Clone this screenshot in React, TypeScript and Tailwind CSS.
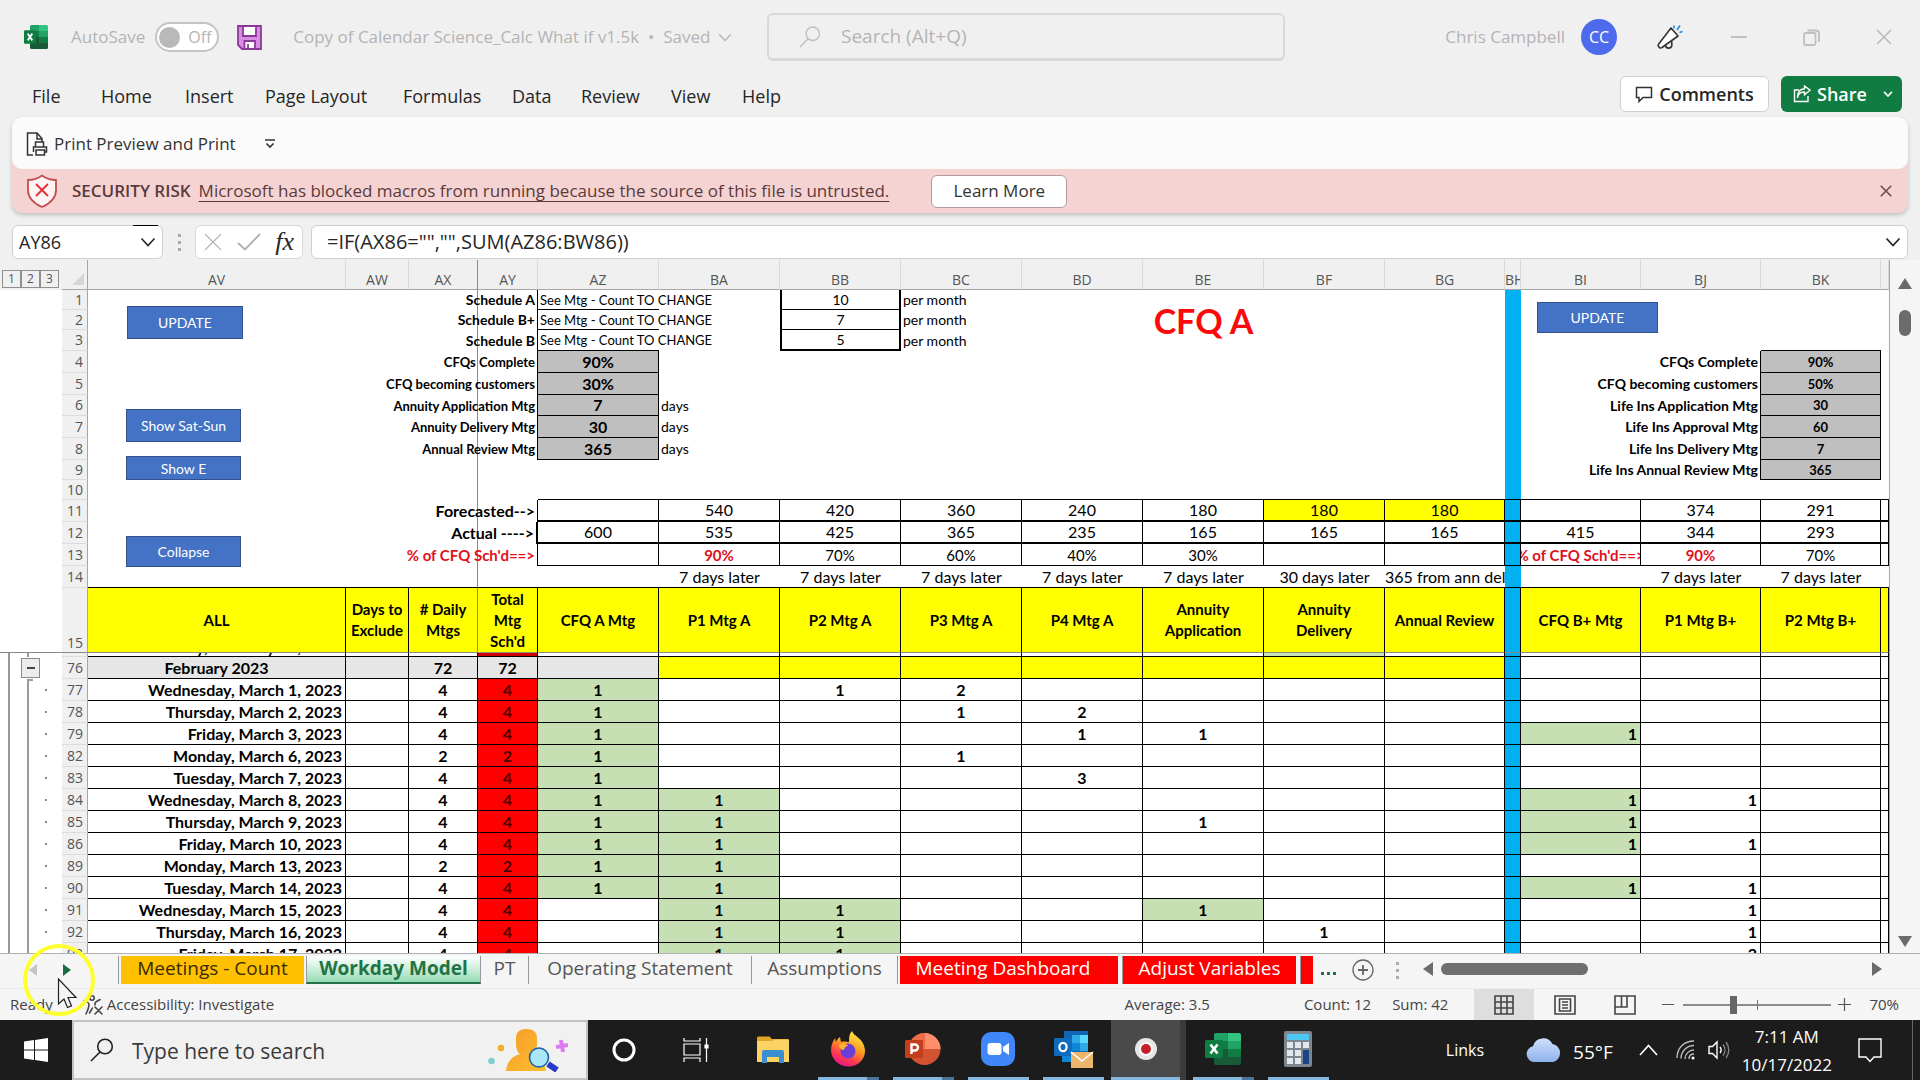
import React from "react";

const UI = "font-['Open_Sans','Noto_Sans',sans-serif]";

type Spec = [string, string?, string?];
type Row = {
  n: string;
  h: string;
  base: Record<string, string>;
  cells: Record<string, Spec>;
  outline?: "box" | "dot" | "first" | "line";
  skip?: string[];
  spans?: Record<string, number>;
};

const COLS: { id: string; w: string }[] = [
  { id: "AV", w: "w-[258px]" },
  { id: "AW", w: "w-[63px]" },
  { id: "AX", w: "w-[69px]" },
  { id: "AY", w: "w-[60px]" },
  { id: "AZ", w: "w-[121px]" },
  { id: "BA", w: "w-[121px]" },
  { id: "BB", w: "w-[121px]" },
  { id: "BC", w: "w-[121px]" },
  { id: "BD", w: "w-[121px]" },
  { id: "BE", w: "w-[121px]" },
  { id: "BF", w: "w-[121px]" },
  { id: "BG", w: "w-[120px]" },
  { id: "BH", w: "w-[16px]" },
  { id: "BI", w: "w-[120px]" },
  { id: "BJ", w: "w-[120px]" },
  { id: "BK", w: "w-[120px]" },
  { id: "BL", w: "" },
];

const S = "text-[13px]";
const M = "text-[14px]";
const L = "text-[15px]";
const XL = "text-[16px]";
const SB = "text-[13px] font-bold";
const MB = "text-[14px] font-bold";
const LB = "text-[15px] font-bold";
const XB = "text-[16px] font-bold";
const RED = "text-[15px] font-bold text-[#e0101c]";
const END = "justify-end pr-0.5";
const MID = "justify-center";
const START = "justify-start pl-0.5";

const topBase: Record<string, string> = {
  AX: "border-r border-[#8a8a8a]",
  BH: "bg-[#00b0f0]",
};
const RB = "border-r border-black";
const GRAY = "bg-[#bfbfbf] border-r border-b border-black";
const BOX = "border-x-2 border-b border-black";
const BOXEND = "border-x-2 border-b-2 border-black";
const MAIN = ["AZ", "BA", "BB", "BC", "BD", "BE", "BF", "BG", "BI", "BJ", "BK", "BL"];

function schedule(n: string, h: string, label: string, v: string, last: boolean): Row {
  const r: Row = {
    n,
    h,
    base: { ...topBase, AY: RB, AZ: "border-b border-black", BB: last ? BOXEND : BOX },
    cells: {
      AY: [label, MB, END],
      AZ: ["See Mtg - Count TO CHANGE", S, START],
      BB: [v, M, MID],
      BC: ["per month", M, START],
    },
  };
  if (last) r.base.BK = "border-b border-black";
  return r;
}

function param(n: string, h: string, a: [string, string, string] | null, b: [string, string] | null): Row {
  const r: Row = { n, h, base: { ...topBase }, cells: {} };
  if (a) {
    r.base.AY = RB;
    r.base.AZ = GRAY;
    r.cells.AY = [a[0], SB, END];
    r.cells.AZ = [a[1], XB, MID];
    if (a[2]) r.cells.BA = [a[2], M, START];
  }
  if (b) {
    r.base.BJ = RB;
    r.base.BK = GRAY;
    r.cells.BJ = [b[0], MB, END];
    r.cells.BK = [b[1], SB, MID];
  }
  return r;
}

function fill(ids: string[], cls: string): Record<string, string> {
  const out: Record<string, string> = {};
  ids.forEach((i) => (out[i] = cls));
  return out;
}

function centred(v: Record<string, string>, cls: string): Record<string, Spec> {
  const out: Record<string, Spec> = {};
  Object.keys(v).forEach((k) => (out[k] = [v[k], cls, MID]));
  return out;
}

const THICK = "border-r border-b-2 border-black";
const THIN = "border-r border-b border-black";
const ALLIDS = COLS.map((c) => c.id);

const rowsTop: Row[] = [
  { ...schedule("1", "h-[20px]", "Schedule A", "10", false), spans: { BE: 3 } },
  { ...schedule("2", "h-[20px]", "Schedule B+", "7", false), skip: ["BE"] },
  { ...schedule("3", "h-[21px]", "Schedule B", "5", true), skip: ["BE"] },
  param("4", "h-[22px]", ["CFQs Complete", "90%", ""], ["CFQs Complete", "90%"]),
  param("5", "h-[22px]", ["CFQ becoming customers", "30%", ""], ["CFQ becoming customers", "50%"]),
  param("6", "h-[21px]", ["Annuity Application Mtg", "7", "days"], ["Life Ins Application Mtg", "30"]),
  param("7", "h-[22px]", ["Annuity Delivery Mtg", "30", "days"], ["Life Ins Approval Mtg", "60"]),
  param("8", "h-[22px]", ["Annual Review Mtg", "365", "days"], ["Life Ins Delivery Mtg", "7"]),
  param("9", "h-[20px]", null, ["Life Ins Annual Review Mtg", "365"]),
  { n: "10", h: "h-[20px]", base: { ...topBase, ...fill(MAIN, "border-b border-black"), BH: "bg-[#00b0f0] border-b border-black" }, cells: {} },
  {
    n: "11",
    h: "h-[22px]",
    base: {
      ...topBase,
      ...fill(MAIN, THICK),
      AY: RB,
      BF: "border-r border-b-2 border-black bg-[#ffff00]",
      BG: "border-r border-b-2 border-black bg-[#ffff00]",
      BH: "bg-[#00b0f0] border-r border-b-2 border-black",
    },
    cells: {
      AY: ["Forecasted-->", XB, END],
      ...centred({ BA: "540", BB: "420", BC: "360", BD: "240", BE: "180", BF: "180", BG: "180", BJ: "374", BK: "291" }, XL),
    },
  },
  {
    n: "12",
    h: "h-[22px]",
    base: { ...topBase, ...fill(MAIN, THICK), AY: "border-r-2 border-black", BH: "bg-[#00b0f0] border-r border-b-2 border-black" },
    cells: {
      AY: ["Actual ---->", XB, END],
      ...centred({ AZ: "600", BA: "535", BB: "425", BC: "365", BD: "235", BE: "165", BF: "165", BG: "165", BI: "415", BJ: "344", BK: "293" }, XL),
    },
  },
  {
    n: "13",
    h: "h-[22px]",
    base: { ...topBase, ...fill(MAIN, THIN), AY: RB, BH: "bg-[#00b0f0] border-r border-b border-black" },
    cells: {
      AY: ["% of CFQ Sch'd==>", RED, END],
      BI: ["% of CFQ Sch'd==>", RED, "justify-center overflow-hidden"],
      ...centred({ BB: "70%", BC: "60%", BD: "40%", BE: "30%", BK: "70%" }, L),
      ...centred({ BA: "90%", BJ: "90%" }, RED),
    },
  },
  {
    n: "14",
    h: "h-[22px]",
    base: { ...fill(ALLIDS, "border-b border-black"), AX: "border-b border-b-black border-r border-r-[#8a8a8a]", BH: "bg-[#00b0f0] border-b border-black" },
    cells: {
      ...centred({ BA: "7 days later", BB: "7 days later", BC: "7 days later", BD: "7 days later", BE: "7 days later", BF: "30 days later", BJ: "7 days later", BK: "7 days later" }, XL),
      BG: ["365 from ann del", XL, "justify-start"],
    },
  },
  {
    n: "15",
    h: "h-[65px]",
    base: {
      ...fill(ALLIDS, "bg-[#ffff00] border-r border-b border-r-black border-b-[#8a8a8a]"),
      AX: "bg-[#ffff00] border-r border-b border-[#8a8a8a]",
      BH: "bg-[#00b0f0] border-r border-b border-r-black border-b-[#8a8a8a]",
    },
    cells: centred(
      {
        AV: "ALL",
        AW: "Days to\nExclude",
        AX: "# Daily\nMtgs",
        AY: "Total\nMtg\nSch'd",
        AZ: "CFQ A Mtg",
        BA: "P1 Mtg A",
        BB: "P2 Mtg A",
        BC: "P3 Mtg A",
        BD: "P4 Mtg A",
        BE: "Annuity\nApplication",
        BF: "Annuity\nDelivery",
        BG: "Annual Review",
        BI: "CFQ B+ Mtg",
        BJ: "P1 Mtg B+",
        BK: "P2 Mtg B+",
      },
      LB
    ),
  },
];
rowsTop[0].cells.BE = ["CFQ A", "text-[34px] font-bold text-[#fa0a0a]", MID];

const GREEN = "bg-[#c6e0b4] border-r border-b border-black";
const dataBase: Record<string, string> = {
  ...fill(ALLIDS, THIN),
  AY: "bg-[#ff0000] border-r border-b border-black",
  BH: "bg-[#00b0f0] border-r border-b border-black",
};

function day(n: string, date: string, mtgs: string, vals: Record<string, string>, green: string[]): Row {
  const cells: Record<string, Spec> = {
    AV: [date, XB, "justify-end pr-[3px]"],
    AX: [mtgs, XB, MID],
    AY: [mtgs, "text-[16px] font-bold text-[#4a0000]", MID],
  };
  Object.keys(vals).forEach((k) => {
    cells[k] = [vals[k], XB, k === "BI" || k === "BJ" ? "justify-end pr-[3px]" : MID];
  });
  return { n, h: "h-[22px]", base: { ...dataBase, ...fill(green, GREEN) }, cells, outline: "dot" };
}

const rowsData: Row[] = [
  {
    n: "",
    h: "h-[4px]",
    base: { ...dataBase, AY: "bg-[#d00000] border-r border-b border-black", BF: GREEN },
    cells: { AV: ["Tuesday, February 28, 2023", XB, "h-[3px] items-end overflow-hidden justify-end pr-[3px]"] },
    outline: "line",
  },
  {
    n: "76",
    h: "h-[22px]",
    base: {
      ...dataBase,
      ...fill(["AV", "AW", "AX", "AY", "AZ"], "bg-[#e7e6e6] border-r border-b border-black"),
      ...fill(["BA", "BB", "BC", "BD", "BE", "BF", "BG"], "bg-[#ffff00] border-r border-b border-black"),
    },
    cells: centred({ AV: "February 2023", AX: "72", AY: "72" }, XB),
    outline: "box",
  },
  { ...day("77", "Wednesday, March 1, 2023", "4", { AZ: "1", BB: "1", BC: "2" }, ["AZ"]), outline: "first" },
  day("78", "Thursday, March 2, 2023", "4", { AZ: "1", BC: "1", BD: "2" }, ["AZ"]),
  day("79", "Friday, March 3, 2023", "4", { AZ: "1", BD: "1", BE: "1", BI: "1" }, ["AZ", "BI"]),
  day("82", "Monday, March 6, 2023", "2", { AZ: "1", BC: "1" }, ["AZ"]),
  day("83", "Tuesday, March 7, 2023", "4", { AZ: "1", BD: "3" }, ["AZ"]),
  day("84", "Wednesday, March 8, 2023", "4", { AZ: "1", BA: "1", BI: "1", BJ: "1" }, ["AZ", "BA", "BI"]),
  day("85", "Thursday, March 9, 2023", "4", { AZ: "1", BA: "1", BE: "1", BI: "1" }, ["AZ", "BA", "BI"]),
  day("86", "Friday, March 10, 2023", "4", { AZ: "1", BA: "1", BI: "1", BJ: "1" }, ["AZ", "BA", "BI"]),
  day("89", "Monday, March 13, 2023", "2", { AZ: "1", BA: "1" }, ["AZ", "BA"]),
  day("90", "Tuesday, March 14, 2023", "4", { AZ: "1", BA: "1", BI: "1", BJ: "1" }, ["AZ", "BA", "BI"]),
  day("91", "Wednesday, March 15, 2023", "4", { BA: "1", BB: "1", BE: "1", BJ: "1" }, ["BA", "BB", "BE"]),
  day("92", "Thursday, March 16, 2023", "4", { BA: "1", BB: "1", BF: "1", BJ: "1" }, ["BA", "BB"]),
  { ...day("93", "Friday, March 17, 2023", "4", { BA: "1", BB: "1", BJ: "2" }, ["BA", "BB"]), outline: "line" },
];

function Outline({ kind }: { kind?: string }) {
  if (!kind) return null;
  return (
    <div className="flex h-full items-stretch">
      <div className="ml-2 w-0.5 bg-[#9a9a9a]" />
      {kind === "box" ? (
        <button aria-label="Collapse group" className="ml-[11px] flex h-5 w-[19px] items-center justify-center self-center border border-[#8a8a8a] bg-[#ececec]">
          <span className="h-0.5 w-2 bg-[#444]" />
        </button>
      ) : (
        <div className="ml-[17px] flex flex-1">
          <div className="w-0.5 bg-[#9a9a9a]" />
          {(kind === "dot" || kind === "first") && (
            <div className={`flex flex-1 items-center justify-center ${kind === "first" ? "bg-[linear-gradient(#9a9a9a,#9a9a9a)] bg-[length:4px_2px] bg-no-repeat" : ""}`}>
              <span className="size-0.5 bg-[#888]" />
            </div>
          )}
        </div>
      )}
    </div>
  );
}

function SheetRow({ row }: { row: Row }) {
  return (
    <tr className={row.h}>
      <td className={`h-px p-0 ${row.n === "15" ? "border-b border-[#8a8a8a]" : ""}`}>
        <Outline kind={row.outline} />
      </td>
      <th
        scope="row"
        className={`border-r border-b border-r-[#a6a6a6] bg-[#f0f0f0] p-0 pr-1 text-right text-[14px] leading-[18px] font-normal text-[#555] ${UI} ${
          row.n === "15" ? "border-b-[#8a8a8a] align-bottom" : "border-b-[#dcdcdc]"
        }`}
      >
        {row.n}
      </th>
      {COLS.filter((c) => !row.skip?.includes(c.id)).map((c) => {
        const cell = row.cells[c.id];
        const multi = row.n === "15";
        return (
          <td key={c.id} rowSpan={row.spans?.[c.id]} className={`p-0 ${row.base[c.id] ?? ""}`}>
            {cell && (
              <div className={`flex text-center whitespace-pre ${multi ? "leading-[21px]" : "leading-[18px]"} ${cell[1]} ${cell[2]}`}>
                <span>{cell[0]}</span>
              </div>
            )}
          </td>
        );
      })}
    </tr>
  );
}

function MacroButton({ label, place }: { label: string; place: string }) {
  return (
    <button className={`absolute border border-[#2f528f] bg-[#4472c4] text-[14px] text-white ${place}`}>{label}</button>
  );
}

function Chevron({ className, w = 2 }: { className: string; w?: number }) {
  return (
    <svg viewBox="0 0 16 10" className={className} fill="none" stroke="currentColor" strokeWidth={w}>
      <path d="M1.5 1.5 8 8.5 14.5 1.5" />
    </svg>
  );
}

function Cross({ className, w = 1.5 }: { className: string; w?: number }) {
  return (
    <svg viewBox="0 0 16 16" className={className} fill="none" stroke="currentColor" strokeWidth={w}>
      <path d="M1 1 15 15M15 1 1 15" />
    </svg>
  );
}

function Magnifier({ className }: { className: string }) {
  return (
    <svg viewBox="0 0 24 24" className={className} fill="none" stroke="currentColor" strokeWidth="1.6">
      <circle cx="15" cy="8.5" r="7.3" />
      <path d="M10 14 1 23" />
    </svg>
  );
}

function ExcelLogo({ className }: { className: string }) {
  return (
    <svg viewBox="0 0 36 32" className={className} preserveAspectRatio="none">
      <path d="M11 0h11.500v8H9V2a2 2 0 0 1 2-2z" fill="#21a366" />
      <path d="M22.500 0H34a2 2 0 0 1 2 2v6H22.500z" fill="#33c481" />
      <path d="M9 8h13.500v8H9z" fill="#107c41" />
      <path d="M22.500 8H36v8H22.500z" fill="#21a366" />
      <path d="M9 16h13.500v8H9z" fill="#185c37" />
      <path d="M22.500 16H36v8H22.500z" fill="#107c41" />
      <path d="M9 24h27v6a2 2 0 0 1-2 2H11a2 2 0 0 1-2-2z" fill="#185c37" />
      <rect x="0" y="7" width="18" height="18" rx="1.500" fill="#107c41" />
      <path d="M5.500 11.500 12.500 20.500M12.500 11.500 5.500 20.500" stroke="#fff" strokeWidth="2.600" />
    </svg>
  );
}

function TitleBar() {
  return (
    <header className="grid h-[72px] grid-cols-[767fr_518fr_635fr] items-center pt-0.5 text-[#b4b4b4]">
      <div className="flex items-center pl-6 text-[17px] whitespace-nowrap">
        <ExcelLogo className="h-6 w-6" />
        <span className="ml-[23px] text-[17px]">AutoSave</span>
        <button role="switch" aria-checked="false" aria-label="AutoSave" className="ml-2.5 flex h-[30px] w-16 items-center rounded-full border-2 border-[#c4c4c4] bg-white px-0.5">
          <span className="size-[21px] rounded-full bg-[#b9b9b9]" />
          <span className="ml-2 text-[16px]">Off</span>
        </button>
        <button aria-label="Save" className="ml-[18px]">
          <svg viewBox="0 0 25 25" className="size-[25px]" stroke="#8a3a96" strokeWidth="1.800">
            <path d="M1 1h23v23H5l-4-4z" fill="#d98be6" />
            <path d="M6 1h13v10H6z" fill="#fff" />
            <path d="M7.500 16h10.500v8H7.500z" fill="#fff" />
            <path d="M11 19v5" />
          </svg>
        </button>
        <span className="ml-[31px]">Copy of Calendar Science_Calc What if v1.5k&nbsp; •&nbsp; Saved</span>
        <Chevron className="ml-2 h-[9px] w-3.5" w={1.5} />
      </div>
      <label className="flex h-12 items-center rounded-md border-2 border-b-[3px] border-[#d9d9d9] bg-[#f0f0f0] pl-[30px]">
        <Magnifier className="size-[22px] text-[#c0c0c0]" />
        <input aria-label="Search" placeholder="Search (Alt+Q)" className="ml-5 flex-1 bg-transparent text-[19px] outline-none placeholder:text-[#b4b4b4]" />
      </label>
      <div className="flex items-center justify-end pr-7 text-[17px]">
        <span>Chris Campbell</span>
        <span className="ml-4 flex size-9 items-center justify-center rounded-full bg-[#4f6bed] text-[16px] text-white">CC</span>
        <button aria-label="What's new" className="ml-10">
          <svg viewBox="0 0 26 26" className="size-[26px]" fill="none" stroke="#333" strokeWidth="1.600" strokeLinejoin="round">
            <path d="M14 4 21 12 5 23.500a2 2 0 0 1-3-.5l-.5-.7a2 2 0 0 1 0-2z" fill="#fff" />
            <path d="M8.500 21.500a3.200 3.200 0 0 0 6.300 0v-4.300" />
            <path d="M17 4.500V1.500M20 6l3-4.500M22.500 8.500l3-1" stroke="#2b88d8" />
          </svg>
        </button>
        <button aria-label="Minimize" className="ml-12 h-0.5 w-4 bg-[#c0c0c0]" />
        <button aria-label="Restore" className="ml-14">
          <svg viewBox="0 0 17 17" className="size-[17px]" fill="none" stroke="#c0c0c0" strokeWidth="1.800">
            <rect x="1" y="4" width="11.500" height="12" rx="1.500" />
            <path d="M4.500 1.500h8.500a3 3 0 0 1 3 3v8.500" />
          </svg>
        </button>
        <button aria-label="Close" className="ml-14">
          <Cross className="size-4 text-[#b8b8b8]" />
        </button>
      </div>
    </header>
  );
}

const MENU: [string, string][] = [
  ["File", "w-[69px]"],
  ["Home", "w-[84px]"],
  ["Insert", "w-[80px]"],
  ["Page Layout", "w-[138px]"],
  ["Formulas", "w-[109px]"],
  ["Data", "w-[69px]"],
  ["Review", "w-[90px]"],
  ["View", "w-[71px]"],
  ["Help", "w-[60px]"],
];

function Menu() {
  return (
    <nav className="flex h-[45px] items-start pr-[18px] pl-8 text-[18px] text-[#262626]">
      <div className="flex h-12 items-center">
        {MENU.map(([m, w]) => (
          <button key={m} className={`text-left whitespace-nowrap ${w}`}>
            {m}
          </button>
        ))}
      </div>
      <div className="ml-auto flex gap-3 pt-1 text-[18px] font-semibold">
        <button className="flex h-9 w-[149px] items-center justify-center gap-1.5 rounded-md border border-[#d0d0d0] bg-white whitespace-nowrap">
          <svg viewBox="0 0 18 18" className="size-[18px]" fill="none" stroke="#333" strokeWidth="1.500">
            <path d="M1.500 2.500h15v10H8l-4 4v-4H1.500z" />
          </svg>
          Comments
        </button>
        <button className="flex h-9 w-[121px] items-center rounded-md bg-[#107c41] pl-3 text-white">
          <svg viewBox="0 0 18 18" className="size-[18px]" fill="none" stroke="#fff" strokeWidth="1.400">
            <path d="M6 5H1.500v11.500H15V11" />
            <path d="M4.500 13C5 8.500 8 7 11.500 7V9.800L17 5.200 11.500 1v2.800C7 4 4.500 7.500 4.500 13z" />
          </svg>
          <span className="ml-1.5">Share</span>
          <Chevron className="ml-4 h-1.5 w-2.5" w={2.6} />
        </button>
      </div>
    </nav>
  );
}

function Ribbon() {
  return (
    <div className="mx-3 rounded-[10px] bg-[#f6d3d3] shadow-[0_2px_4px_rgba(0,0,0,0.2)]">
      <div className="flex h-[52px] items-center rounded-[10px] bg-[#fbfbfb] pt-0.5 pl-3.5 text-[17px] text-[#333]">
        <button className="flex items-center gap-1.5">
          <svg viewBox="0 0 22 24" className="h-6 w-[22px]" fill="none" stroke="#333" strokeWidth="1.500">
            <path d="M7 23H1.500V1H11l5 5.500V10" />
            <path d="M11 1v6h5M9.500 15v-5h8v5" />
            <path d="M7.500 20v-5h13v5h-2.500M10 18h8.500v5H10z" />
          </svg>
          Print Preview and Print
        </button>
        <button aria-label="Customize toolbar" className="ml-7">
          <svg viewBox="0 0 12 10" className="h-2.5 w-3" fill="none" stroke="#333" strokeWidth="1.600">
            <path d="M1 1h10M2.500 4.500 6 8l3.500-3.500" />
          </svg>
        </button>
      </div>
      <div className="flex h-11 items-center px-4 pl-3.5 text-[17px] whitespace-nowrap text-[#5a3a3a]">
        <svg viewBox="0 0 32 34" className="h-[34px] w-8" fill="none" strokeWidth="1.800">
          <path d="M16 1.500c4 3 8.500 4.500 14 4.500v10c0 8-6 13.500-14 17-8-3.500-14-9-14-17V6c5.500 0 10-1.500 14-4.500z" fill="#fdf5f5" stroke="#c0504d" />
          <path d="M10 10 22 22M22 10 10 22" stroke="#e03030" />
        </svg>
        <span className="ml-3.5 font-semibold">SECURITY RISK</span>
        <a href="#macros" className="ml-2 underline underline-offset-4">
          Microsoft has blocked macros from running because the source of this file is untrusted.
        </a>
        <button className="ml-[42px] h-[33px] w-[136px] rounded-md border border-[#b39a9a] bg-white text-[17px] text-[#333]">Learn More</button>
        <button aria-label="Dismiss" className="ml-auto">
          <Cross className="size-3 text-[#6b4a4a]" w={2} />
        </button>
      </div>
    </div>
  );
}

function FormulaBar() {
  return (
    <div className="flex h-[47px] items-end px-3 text-[18px] text-[#262626]">
      <div className="flex h-[35px] w-full items-start">
        <div className="relative flex h-[34px] w-[151px] items-center rounded-md border border-[#d0d0d0] bg-white pr-1.5">
          <input aria-label="Name box" defaultValue="AY86" className="w-28 bg-transparent pl-1.5 outline-none" />
          <button aria-label="Names" className="ml-auto">
            <Chevron className="h-2.5 w-4" w={1.6} />
          </button>
          <div className="absolute -top-px right-1 h-px w-[25px] bg-black" />
        </div>
        <div className="flex h-[34px] w-8 flex-col items-center justify-center gap-1">
          <i className="size-[3px] bg-[#aaa]" />
          <i className="size-[3px] bg-[#aaa]" />
          <i className="size-[3px] bg-[#aaa]" />
        </div>
        <div className="flex h-[34px] w-[108px] items-center justify-between rounded-md border border-[#d8d8d8] bg-white px-2">
          <button aria-label="Cancel">
            <Cross className="size-[18px] text-[#b0b0b0]" w={1.2} />
          </button>
          <button aria-label="Enter">
            <svg viewBox="0 0 24 18" className="h-[18px] w-6" fill="none" stroke="#b0b0b0" strokeWidth="1.800">
              <path d="M1 10 8 16.500 23 1" />
            </svg>
          </button>
          <button aria-label="Insert function" className="font-['Liberation_Serif',serif] text-[26px] leading-6 font-medium italic">
            fx
          </button>
        </div>
        <div className="ml-2 flex h-[34px] flex-1 items-center rounded-md border border-[#d0d0d0] bg-white pr-1.5 pl-[15px]">
          <input aria-label="Formula" defaultValue={'=IF(AX86="","",SUM(AZ86:BW86))'} className="flex-1 bg-transparent text-[20px] leading-8 outline-none" />
          <button aria-label="Expand formula bar">
            <Chevron className="h-2.5 w-4" w={1.8} />
          </button>
        </div>
      </div>
    </div>
  );
}

function Sheet() {
  return (
    <div className="flex min-h-0 flex-1 overflow-hidden bg-[#f5f5f5]">
      <div className="relative min-w-0 flex-1 overflow-hidden border-r border-[#a6a6a6] bg-white font-['Lato',sans-serif] text-black">
        <table className="w-full table-fixed border-separate border-spacing-0">
          <colgroup>
            <col className="w-[62px]" />
            <col className="w-[26px]" />
            {COLS.map((c) => (
              <col key={c.id} className={c.w} />
            ))}
          </colgroup>
          <thead>
            <tr className={`h-[30px] bg-[#f0f0f0] text-[14px] leading-[18px] text-[#555] ${UI}`}>
              <td className="p-0">
                <div className="flex pt-2 pl-0.5">
                  {["1", "2", "3"].map((n) => (
                    <button key={n} className="h-[18px] w-[19px] border border-[#909090] text-[12px] leading-4">
                      {n}
                    </button>
                  ))}
                </div>
              </td>
              <td className="border-r border-b border-[#a6a6a6] p-0">
                <svg viewBox="0 0 12 12" className="mt-2 ml-2.5 size-3">
                  <path d="M12 0v12H0z" fill="#d6d6d6" />
                </svg>
              </td>
              {COLS.map((c) => (
                <th
                  key={c.id}
                  scope="col"
                  className={`overflow-hidden border-r border-b border-b-[#a6a6a6] p-0 pt-2.5 font-normal ${c.id === "AX" ? "border-r-[#8a8a8a]" : "border-r-[#d8d8d8]"}`}
                >
                  {c.id === "BL" ? "" : c.id}
                </th>
              ))}
            </tr>
          </thead>
          <tbody>
            {rowsTop.map((r) => (
              <SheetRow key={r.n} row={r} />
            ))}
            {rowsData.map((r) => (
              <SheetRow key={r.n} row={r} />
            ))}
          </tbody>
        </table>
        <MacroButton label="UPDATE" place="top-[46px] left-[127px] h-[33px] w-[116px]" />
        <MacroButton label="Show Sat-Sun" place="top-[149px] left-[126px] h-[33px] w-[115px]" />
        <MacroButton label="Show E" place="top-[196px] left-[126px] h-6 w-[115px]" />
        <MacroButton label="Collapse" place="top-[276px] left-[126px] h-[31px] w-[115px]" />
        <MacroButton label="UPDATE" place="top-[42px] left-[1537px] h-[31px] w-[121px]" />
      </div>
      <div className="flex w-[30px] flex-col items-center bg-[#f5f5f5] pt-[18px] pb-1.5 text-[#6b6b6b]">
        <svg viewBox="0 0 14 11" className="h-[11px] w-3.5">
          <path d="M7 0 14 11H0z" fill="currentColor" />
        </svg>
        <div className="mt-[21px] h-[26px] w-3 rounded-full bg-[#6b6b6b]" />
        <svg viewBox="0 0 14 11" className="mt-auto h-[11px] w-3.5">
          <path d="M7 11 14 0H0z" fill="currentColor" />
        </svg>
      </div>
    </div>
  );
}

function SheetTabs() {
  return (
    <div className="flex h-[35px] shrink-0 items-start border-t border-[#b0b0b0] bg-[#f5f5f5] pt-0.5 text-[19px] leading-[24px] whitespace-nowrap text-[#555]">
      <button aria-label="Previous sheets" className="mt-2 ml-[29px]">
        <svg viewBox="0 0 8 12" className="h-3 w-2">
          <path d="M8 0v12L0 6z" fill="#c4c4c4" />
        </svg>
      </button>
      <button aria-label="Next sheets" className="mt-2 ml-[26px]">
        <svg viewBox="0 0 8 12" className="h-3 w-2">
          <path d="M0 0v12L8 6z" fill="#1e6b41" />
        </svg>
      </button>
      <div className="ml-[47px] h-7 w-[3px] border-l border-[#999]" />
      <button className="h-7 w-[183px] bg-[#ffc000] pb-1 text-[#3b2a00]">Meetings - Count</button>
      <button className="ml-0.5 h-7 w-[175px] border-x border-b-2 border-x-[#999] border-b-[#217346] bg-linear-to-b from-white to-[#96dcb4] pb-0.5 font-bold text-[#217346]">Workday Model</button>
      <button className="h-7 w-12 border-r border-[#999] pb-1">PT</button>
      <button className="h-7 w-[223px] border-r border-[#999] pb-1">Operating Statement</button>
      <button className="h-7 w-[146px] border-r border-[#999] pb-1">Assumptions</button>
      <button className="ml-0.5 h-7 w-[218px] bg-[#ff0000] pr-3 pb-1 text-white">Meeting Dashboard</button>
      <div className="h-7 w-[5px] border-r border-[#999]" />
      <button className="h-7 w-[173px] bg-[#ff0000] pb-1 text-white">Adjust Variables</button>
      <div className="h-7 w-[5px] border-r border-[#999]" />
      <div className="h-7 w-3 bg-[#ff0000]" />
      <button aria-label="More sheets" className="mt-4 ml-2 flex gap-[3px]">
        <i className="size-[3px] bg-[#217346]" />
        <i className="size-[3px] bg-[#217346]" />
        <i className="size-[3px] bg-[#217346]" />
      </button>
      <button aria-label="New sheet" className="mt-[3px] ml-4">
        <svg viewBox="0 0 22 22" className="size-[22px]" fill="none" stroke="#666" strokeWidth="1.300">
          <circle cx="11" cy="11" r="10" />
          <path d="M11 6v10M6 11h10" strokeWidth="1.800" />
        </svg>
      </button>
      <div className="mt-1.5 ml-[22px] flex flex-col gap-1">
        <i className="size-[3px] bg-[#aaa]" />
        <i className="size-[3px] bg-[#aaa]" />
        <i className="size-[3px] bg-[#aaa]" />
      </div>
      <div className="mt-1.5 ml-6 flex flex-1 items-center pr-[38px]">
        <svg viewBox="0 0 10 14" className="h-3.5 w-2.5">
          <path d="M10 0v14L0 7z" fill="#6b6b6b" />
        </svg>
        <div className="ml-2 h-3 w-[147px] rounded-full bg-[#6f6f6f]" />
        <svg viewBox="0 0 10 14" className="ml-auto h-3.5 w-2.5">
          <path d="M0 0v14L10 7z" fill="#6b6b6b" />
        </svg>
      </div>
    </div>
  );
}

function StatusBar() {
  return (
    <div className="flex h-8 shrink-0 items-center border-t border-[#ececec] bg-[#f5f5f5] pr-[21px] pl-2.5 text-[15px] whitespace-nowrap text-[#444]">
      <span>Ready</span>
      <svg viewBox="0 0 22 22" className="ml-[29px] size-[22px]" fill="none" stroke="#444" strokeWidth="1.600" strokeLinecap="round">
        <circle cx="10" cy="4" r="2.200" />
        <path d="M2 6.500c3 1.500 5 2 5 3.500 0 3-1 6-3 10M18 5.500c-3 2-5 2-5 4v1.500M7.500 19c1.500-2 2-4 3-5M13 13l7 7M20 13l-7 7" />
      </svg>
      <span className="ml-[3px]">Accessibility: Investigate</span>
      <span className="ml-auto">Average: 3.5</span>
      <span className="ml-[94px]">Count: 12</span>
      <span className="ml-[21px]">Sum: 42</span>
      <button aria-label="Normal view" className="ml-[26px] flex h-full w-[60px] items-center justify-center bg-[#dedede]">
        <svg viewBox="0 0 20 20" className="size-5" fill="none" stroke="#444" strokeWidth="1.600">
          <path d="M1 1h18v18H1zM7 1v18M13 1v18M1 7h18M1 13h18" />
        </svg>
      </button>
      <button aria-label="Page layout view" className="ml-5">
        <svg viewBox="0 0 22 20" className="h-5 w-[22px]" fill="none" stroke="#444" strokeWidth="1.600">
          <path d="M1 1h20v18H1zM5.500 4h11v12h-11zM8 7h6M8 10h6M8 13h6" />
        </svg>
      </button>
      <button aria-label="Page break preview" className="ml-[38px]">
        <svg viewBox="0 0 22 20" className="h-5 w-[22px]" fill="none" stroke="#444" strokeWidth="1.600">
          <path d="M1 1h20v18H1zM1 12h12V1M7.500 1v11" />
        </svg>
      </button>
      <button aria-label="Zoom out" className="ml-[26px] h-px w-3 bg-[#555]" />
      <div className="relative ml-[9px] flex items-center">
        <div className="absolute left-[74px] h-2.5 w-px bg-[#777]" />
        <input
          type="range"
          aria-label="Zoom"
          min={0}
          max={100}
          defaultValue={33}
          className="h-[18px] w-[148px] appearance-none bg-transparent [&::-webkit-slider-runnable-track]:h-0.5 [&::-webkit-slider-runnable-track]:bg-[#8a8a8a] [&::-webkit-slider-thumb]:-mt-2 [&::-webkit-slider-thumb]:h-[18px] [&::-webkit-slider-thumb]:w-[7px] [&::-webkit-slider-thumb]:appearance-none [&::-webkit-slider-thumb]:bg-[#666]"
        />
      </div>
      <button aria-label="Zoom in" className="ml-[7px]">
        <svg viewBox="0 0 13 13" className="size-[13px]" stroke="#555" strokeWidth="1.200">
          <path d="M6.500 0v13M0 6.500h13" />
        </svg>
      </button>
      <span className="ml-[18px]">70%</span>
    </div>
  );
}

function Task({ label, run, active, children }: { label: string; run?: "one" | "many"; active?: boolean; children: React.ReactNode }) {
  return (
    <button aria-label={label} className={`flex h-full w-[75px] flex-col items-center ${active ? "border-r-[6px] border-[#3a3a3a] bg-[#4a4a4a]" : ""}`}>
      <span className="flex flex-1 items-center">{children}</span>
      {run && (
        <span className={`flex h-[3px] justify-end bg-[#85b8e0] ${active ? "w-full" : "w-[61px]"}`}>
          {run === "many" && <span className="w-3 bg-[#4d7396]" />}
        </span>
      )}
    </button>
  );
}

function Taskbar() {
  return (
    <footer className="flex h-[60px] shrink-0 items-center bg-[#1c1c1c] text-white">
      <button aria-label="Start" className="flex w-[72px] justify-center">
        <svg viewBox="0 0 24 24" className="size-6" fill="#fff">
          <path d="M0 3.400 10 2v9.600H0zM11 1.900 24 0v11.600H11zM0 12.400h10V22L0 20.600zM11 12.400h13V24l-13-1.900z" />
        </svg>
      </button>
      <label className="flex h-[60px] w-[516px] items-center border-2 border-[#c2c2c2] bg-[#f1f1f1] pr-[18px] pl-4">
        <Magnifier className="size-6 text-[#222]" />
        <input aria-label="Search Windows" placeholder="Type here to search" className="ml-[18px] w-0 flex-1 bg-transparent pt-1 text-[21px] outline-none placeholder:text-[#3a3a3a]" />
        <svg viewBox="0 0 80 44" className="h-11 w-20">
          <defs>
            <linearGradient id="person" x1="0" y1="0" x2="1" y2="1">
              <stop offset="0" stopColor="#f79a2a" />
              <stop offset="1" stopColor="#fbc02d" />
            </linearGradient>
          </defs>
          <path d="M28 10c0-6 4-9 10.500-9S49 4 49 10v6c0 5-2 8-5 10 9 2 13 8 14 17H18c1-9 6-15 14-17-3-2-4-6-4-10z" fill="url(#person)" />
          <circle cx="13" cy="20" r="3.300" fill="#f0ae2b" />
          <circle cx="3.500" cy="33" r="3.300" fill="#7fd0cc" />
          <path d="M73 12l2 12M68 19l12-2" stroke="#dd7cf0" strokeWidth="4" />
          <path d="M60 36 69 42" stroke="#2838c8" strokeWidth="6" />
          <circle cx="51" cy="29.500" r="9.500" fill="#a9e7f7" stroke="#1d5fa8" strokeWidth="1.600" />
        </svg>
      </label>
      <div className="-ml-0.5 flex h-full">
        <Task label="Cortana">
          <svg viewBox="0 0 26 26" className="size-[26px]">
            <circle cx="13" cy="13" r="10" fill="none" stroke="#fff" strokeWidth="3" />
          </svg>
        </Task>
        <Task label="Task view">
          <svg viewBox="0 0 26 26" className="mr-1.5 size-[26px]" fill="none" stroke="#fff" strokeWidth="1.200">
            <path d="M1 7h16v11H1zM1 1v3h16V1M1 25v-4h16v4M23.500 1v24" />
            <path d="M22 8h3v3h-3z" fill="#fff" />
          </svg>
        </Task>
        <Task label="File Explorer">
          <svg viewBox="0 0 34 28" className="mr-0.5 h-7 w-[34px]">
            <path d="M1 2a1.500 1.500 0 0 1 1.500-1.500h11L16 3h15.500A1.500 1.500 0 0 1 33 4.500V10H1z" fill="#e0a526" />
            <path d="M1 5h15l2-1.500h15V26H1z" fill="#fbd264" />
            <path d="M6 27V16a2 2 0 0 1 2-2h18a2 2 0 0 1 2 2v11h-5v-6H11v6z" fill="#3b8fd0" />
          </svg>
        </Task>
        <Task label="Firefox" run="many">
          <svg viewBox="0 0 36 36" className="mr-0.5 size-9">
            <defs>
              <linearGradient id="fox" x1="0.8" y1="0" x2="0.3" y2="1">
                <stop offset="0" stopColor="#fff44f" />
                <stop offset="0.450" stopColor="#ff9a1f" />
                <stop offset="0.750" stopColor="#ff3a50" />
                <stop offset="1" stopColor="#e31587" />
              </linearGradient>
            </defs>
            <path d="M22 0c1 5 12 7 13 19 .5 9-7 16.500-16.500 16.500S1 28 1 19c0-5 2-9 4-12l1 4c1-2 2-4 4-5l1 5c3-1 6 0 8 0 0-4 0-8 3-11z" fill="url(#fox)" />
            <circle cx="18" cy="20" r="7.500" fill="#6a3fd6" />
            <path d="M9 14c4-3 8-1 9 1-2 0-4 2-4 4-2 0-5-2-5-5z" fill="#ffb22e" />
          </svg>
        </Task>
        <Task label="PowerPoint" run="many">
          <svg viewBox="0 0 36 34" className="mr-0.5 h-[34px] w-9">
            <circle cx="19.500" cy="17" r="16" fill="#d35230" />
            <path d="M19.500 1a16 16 0 0 1 16 16h-16z" fill="#ff8f6b" />
            <path d="M19.500 1a16 16 0 0 0-16 16h16z" fill="#ed6c47" />
            <rect x="0" y="8" width="18" height="18" rx="1.500" fill="#c43e1c" />
            <path d="M6.500 22V12.500H10a3 3 0 0 1 0 6H6.500" fill="none" stroke="#fff" strokeWidth="2.400" />
          </svg>
        </Task>
        <Task label="Zoom" run="one">
          <svg viewBox="0 0 36 36" className="mr-0.5 size-9">
            <rect x="1" y="1" width="34" height="34" rx="10" fill="#4087fc" />
            <rect x="7.500" y="12" width="14" height="12" rx="3" fill="#fff" />
            <path d="M23 16l6-4v12l-6-4z" fill="#fff" />
          </svg>
        </Task>
        <Task label="Outlook" run="one">
          <svg viewBox="0 0 40 38" className="h-[38px] w-10">
            <path d="M10 1h24v31H10z" fill="#1066b5" />
            <path d="M18 5h8v8h-8z" fill="#32a9e7" />
            <path d="M26 5h8v8h-8z" fill="#58d9fd" />
            <path d="M18 13h8v8h-8zM8 24h12v8H8z" fill="#0d88d8" />
            <path d="M26 13h8v8h-8z" fill="#32a9e7" />
            <rect x="0" y="8" width="18" height="18" rx="1.500" fill="#0f6cbd" />
            <ellipse cx="9" cy="17" rx="3.600" ry="4.200" fill="none" stroke="#fff" strokeWidth="2.200" />
            <path d="M17 22h22v16H17z" fill="#ecb56c" />
            <path d="M17 22 28 31 39 22" fill="none" stroke="#fff" strokeWidth="1.600" />
          </svg>
        </Task>
        <Task label="Recorder" run="one" active>
          <svg viewBox="0 0 24 24" className="size-6">
            <circle cx="12" cy="12" r="11" fill="#e6e6e6" />
            <circle cx="12" cy="12" r="7" fill="#fafafa" />
            <circle cx="12" cy="12" r="5" fill="#c4202c" />
          </svg>
        </Task>
        <Task label="Excel" run="many">
          <ExcelLogo className="mr-0.5 h-8 w-9" />
        </Task>
        <Task label="Calculator" run="one">
          <svg viewBox="0 0 28 36" className="mr-0.5 h-9 w-7">
            <rect width="28" height="36" rx="2" fill="#7d8792" />
            <rect x="3" y="3" width="22" height="6" fill="#4cc8f2" />
            <path d="M3 11h6v6H3zM11 11h6v6h-6zM19 11h6v6h-6zM3 19h6v6H3zM11 19h6v6h-6zM3 27h6v6H3zM11 27h6v6h-6z" fill="#e4e8ec" />
            <path d="M19 19h6v14h-6z" fill="#1c4587" />
          </svg>
        </Task>
      </div>
      <div className="ml-auto flex h-full items-center text-[16px] whitespace-nowrap">
        <span className="text-[16px]">Links</span>
        <svg viewBox="0 0 38 26" className="ml-[41px] h-[26px] w-[38px]">
          <defs>
            <linearGradient id="cloud" x1="0" y1="0" x2="0" y2="1">
              <stop offset="0" stopColor="#cfe0fb" />
              <stop offset="1" stopColor="#8fb3ee" />
            </linearGradient>
          </defs>
          <path d="M9 25a8 8 0 0 1-1-15.800A10.500 10.500 0 0 1 27.500 7 9.200 9.200 0 0 1 28 25z" fill="url(#cloud)" />
        </svg>
        <span className="ml-2.5 pt-1 text-[19px]">55°F</span>
        <svg viewBox="0 0 19 12" className="ml-[26px] h-3 w-[19px]" fill="none" stroke="#fff" strokeWidth="1.600">
          <path d="M1 11 9.500 1.500 18 11" />
        </svg>
        <svg viewBox="0 0 20 20" className="ml-[18px] size-5" fill="none" stroke="#bbb" strokeWidth="1.400">
          <path d="M1 18C1 8 8 1 18 1M5 18.500C5 11 11 5.500 18 5.500M9 19c0-5 4-9 9-9M13 19c0-3 2-5 5-5" />
          <circle cx="17" cy="18" r="1.500" fill="#fff" stroke="none" />
        </svg>
        <svg viewBox="0 0 22 20" className="ml-3 h-5 w-[22px]" fill="none" stroke="#fff" strokeWidth="1.400">
          <path d="M1 6.500h3.500L9 2v16l-4.500-4.500H1z" />
          <path d="M12 7a5 5 0 0 1 0 6" />
          <path d="M15 4.500a9 9 0 0 1 0 11M18 2a13 13 0 0 1 0 16" stroke="#888" />
        </svg>
        <div className="ml-3 pt-0.5 text-center text-[17px] leading-7">
          <div>7:11 AM</div>
          <div>10/17/2022</div>
        </div>
        <svg viewBox="0 0 24 25" className="ml-[26px] h-[25px] w-6" fill="none" stroke="#fff" strokeWidth="1.400">
          <path d="M1 1h22v18h-7l-4 4.500L8 19H1z" />
        </svg>
        <div className="ml-[30px] h-full w-2 border-l border-[#666]" />
      </div>
    </footer>
  );
}

export default function App() {
  return (
    <div className={`relative flex h-screen flex-col overflow-hidden bg-[#f0f0f0] ${UI}`}>
      <TitleBar />
      <Menu />
      <Ribbon />
      <FormulaBar />
      <Sheet />
      <SheetTabs />
      <StatusBar />
      <Taskbar />
      <svg viewBox="0 0 76 76" className="pointer-events-none absolute bottom-[62px] left-[21px] size-[76px]" fill="none">
        <circle cx="38" cy="38" r="34" stroke="#ffff2e" strokeWidth="4" />
        <path d="M37.500 37v25l5.500-5 3.500 8.500 4-1.600L47 55.500h8z" fill="#f5f5f5" stroke="#222" strokeWidth="1.200" />
      </svg>
    </div>
  );
}
